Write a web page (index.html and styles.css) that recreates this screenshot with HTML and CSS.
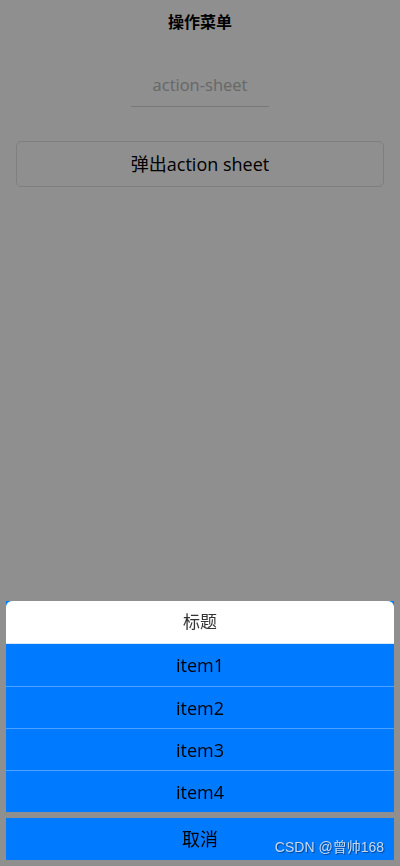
FILE: index.html
```html
<!DOCTYPE html>
<html lang="zh-CN">
<head>
  <meta charset="UTF-8" />
  <meta name="viewport" content="width=device-width, initial-scale=1.0"/>
  <title>操作菜单</title>
  <link rel="stylesheet" href="styles.css">
</head>
<body>
  <header class="topbar">操作菜单</header>

  <div class="page">
    <input class="field" type="text" placeholder="action-sheet">
    <button class="openbtn" id="openSheet">弹出action sheet</button>
  </div>

  <div class="mask" id="mask">
    <div class="sheet">
      <div class="sheet-group">
        <div class="sheet-title">标题</div>
        <div class="sheet-item">item1</div>
        <div class="sheet-item">item2</div>
        <div class="sheet-item">item3</div>
        <div class="sheet-item">item4</div>
      </div>
      <div class="sheet-cancel" id="cancelSheet">取消</div>
    </div>
  </div>

  <span class="watermark">CSDN @曾帅168</span>
</body>
</html>
```

FILE: styles.css
```css
*, *::before, *::after { box-sizing: border-box; }
* {
  margin: 0;
  padding: 0;
  font-family: "Open Sans", "Noto Sans CJK SC", sans-serif;
}

body {
  background: #fff;
  height: 866px;
}

.topbar {
  height: 44px;
  line-height: 44px;
  text-align: center;
  font-size: 16px;
  font-weight: bold;
  color: #000;
}

.page {
  display: flex;
  flex-direction: column;
  align-items: center;
  padding: 19px 16px 0;
}

.field {
  width: 138px;
  height: 44px;
  border: none;
  border-bottom: 1px solid #d4d4d4;
  text-align: center;
  font-size: 16.5px;
  outline: none;
  background: transparent;
}

.field::placeholder { color: #b8b8b8; }

.openbtn {
  width: 100%;
  height: 46px;
  margin-top: 34px;
  padding-bottom: 3px;
  border: 1px solid #e0e0e0;
  border-radius: 5px;
  background: #fff;
  font-size: 18px;
  color: #000;
}

.mask {
  position: fixed;
  inset: 0;
  background-color: rgba(0, 0, 0, 0.44);
  display: flex;
  flex-direction: column;
  justify-content: flex-end;
  padding: 0 6px 6px;
}

.sheet {
  display: flex;
  flex-direction: column;
  gap: 6px;
}

.sheet-group { background: #007aff; }

.sheet-title {
  height: 43px;
  line-height: 42px;
  text-align: center;
  font-size: 17px;
  color: #333;
  background: #fff;
  border-radius: 6px 6px 0 0;
  border-bottom: 1px solid #d9e6f5;
}

.sheet-item,
.sheet-cancel {
  height: 42px;
  line-height: 42px;
  text-align: center;
  font-size: 18px;
  color: #000;
  background: #007aff;
}

.sheet-item + .sheet-item { border-top: 1px solid #4fa1ff; }

.watermark {
  position: fixed;
  right: 16px;
  bottom: 10px;
  font-family: "Liberation Sans", "Noto Sans CJK SC", sans-serif;
  font-size: 14px;
  color: #c8d8ec;
  text-shadow: 1px 1px 1px rgba(0, 0, 0, 0.45);
}
```
